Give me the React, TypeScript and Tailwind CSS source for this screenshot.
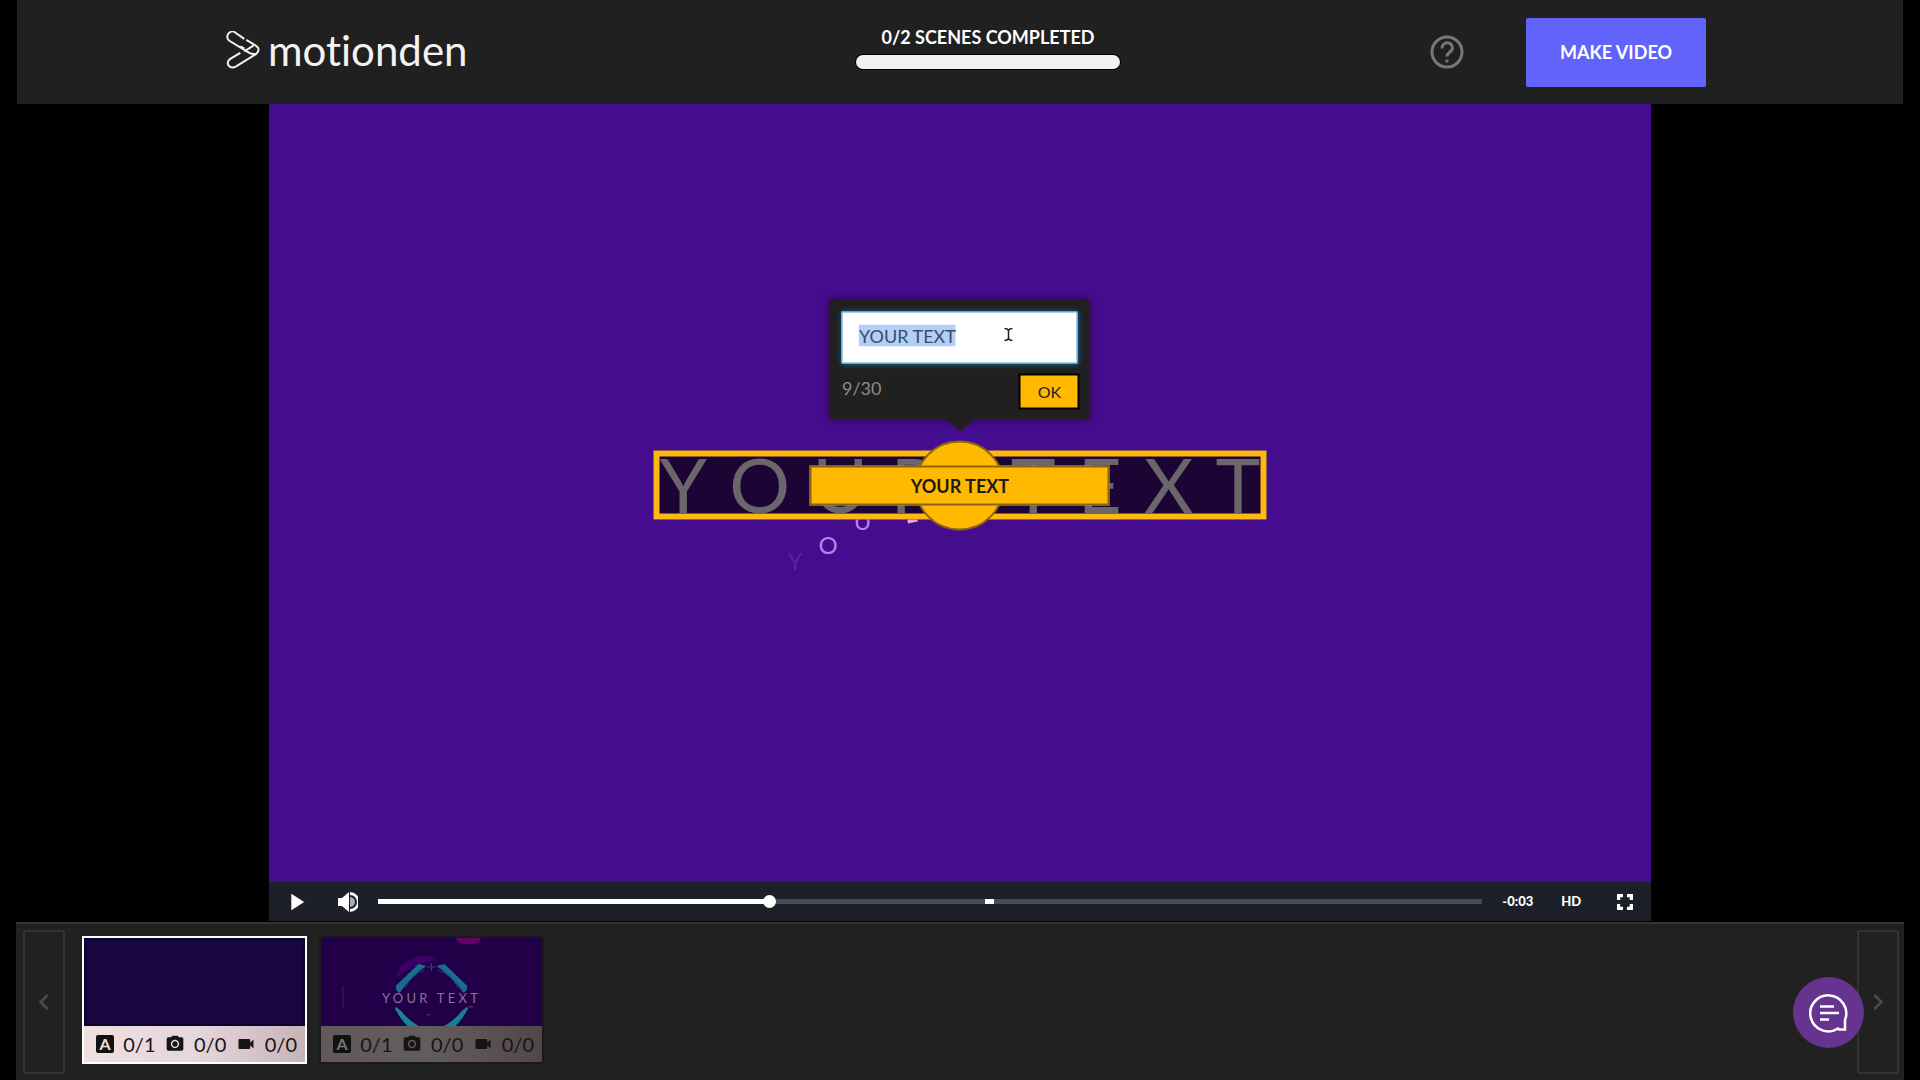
import { useEffect, useRef, useState } from "react";
import { MdCameraAlt, MdChevronLeft, MdChevronRight, MdPlayArrow, MdVideocam } from "react-icons/md";

const MAX_LENGTH = 30;

const scenes = [
  { id: 1, active: true, text: "0/1", photo: "0/0", video: "0/0" },
  { id: 2, active: false, text: "0/1", photo: "0/0", video: "0/0" },
];

function Logo() {
  return (
    <a href="#" className="flex items-center gap-2 text-[#f3f3f3]">
      <svg viewBox="76 98 102 116" className="h-[38px] w-[34px]" fill="none" stroke="currentColor" strokeWidth="6">
        <path d="M131 122 L105 104 A15 15 0 0 0 84 127 L145 164 Q158 171 168 167 Q176 161 174 151 Q170 144 160 139 L137 125" />
        <path d="M160 142 L131 160" />
        <path d="M119 165 L88 183 Q77 191 82 202 Q91 214 106 206 L168 168" />
        <path d="M119 145 L131 152" />
      </svg>
      <span className="text-[42px] leading-[48px] [font-variant-ligatures:none]">motionden</span>
    </a>
  );
}

function Header() {
  return (
    <header className="mx-[17px] flex h-26 shrink-0 items-center bg-[#202020] pr-[197px] pl-[209px]">
      <div className="w-[630px] pb-1">
        <Logo />
      </div>
      <div className="flex w-[264px] flex-col items-center gap-1 pb-3">
        <span id="progress-label" className="text-lg leading-7 font-bold text-white">
          0/2 SCENES COMPLETED
        </span>
        <div
          role="progressbar"
          aria-labelledby="progress-label"
          aria-valuenow={0}
          aria-valuemax={2}
          className="h-[14px] w-full rounded-full bg-[#f1f1f1] ring-1 ring-black"
        />
      </div>
      <div className="ml-auto flex items-center gap-[62px]">
        <button type="button" aria-label="Help" className="text-[#777]">
          <svg viewBox="0 0 34 34" className="size-[34px]" fill="none" stroke="currentColor" strokeWidth="3">
            <circle cx="17" cy="17" r="15" />
            <path d="M12 13.500 C12 6 22.500 6 22.500 13 C22.500 17 17 17 17 21.500" />
            <path d="M17 24.500 V27.500" />
          </svg>
        </button>
        <button type="button" className="h-[69px] w-[180px] rounded-xs bg-[#6163fb] text-lg font-bold text-white">
          MAKE VIDEO
        </button>
      </div>
    </header>
  );
}

function TextPopup() {
  const [value, setValue] = useState("YOUR TEXT");
  const inputRef = useRef<HTMLInputElement>(null);

  useEffect(() => {
    inputRef.current?.focus();
    inputRef.current?.select();
  }, []);

  return (
    <div className="absolute bottom-full left-1/2 mb-[31px] w-[260px] -translate-x-1/2 rounded-sm bg-[#202020] p-3 shadow-[0_0_8px_rgba(0,0,0,0.5)]">
      <div className="relative">
        <input
          ref={inputRef}
          aria-label="Text"
          value={value}
          maxLength={MAX_LENGTH}
          onChange={(e) => setValue(e.target.value)}
          className="block h-[52px] w-full border border-[#4aa5d8] bg-white px-4 pb-1 text-lg text-[#414b5b] shadow-[0_0_6px_#1272a8] outline-none selection:bg-[#b0d0fa] selection:text-[#414b5b]"
        />
        <svg
          viewBox="0 0 10 14"
          className="pointer-events-none absolute top-4 right-16 h-[14px] w-[10px]"
          fill="none"
          stroke="#222"
          strokeWidth="1.5"
        >
          <path d="M1 1 Q5 1 5 4 Q5 1 9 1 M5 3 V11 M1 13 Q5 13 5 10 Q5 13 9 13" />
        </svg>
      </div>
      <div className="mt-3 flex items-start justify-between">
        <span className="text-lg leading-6 text-[#8b8b8b]">
          {value.length}/{MAX_LENGTH}
        </span>
        <button type="button" className="h-8 w-[57px] bg-[#feb900] text-base text-[#222] ring-2 ring-black">
          OK
        </button>
      </div>
      <div className="absolute top-full left-1/2 h-3 w-7 -translate-x-1/2 bg-[#202020] [clip-path:polygon(0_0,100%_0,50%_100%)]" />
    </div>
  );
}

function Stage() {
  return (
    <div className="relative flex-1 bg-[#460c90]">
      <div className="absolute top-[49%] left-1/2 h-[69px] w-[613px] -translate-x-1/2 -translate-y-1/2">
        {/* letters still flying in behind the placeholder */}
        <div aria-hidden className="absolute top-12 left-[134px] flex items-start gap-4 text-2xl leading-7 text-[#b583e8]">
          <span className="mt-12 text-[#5a22a0]">Y</span>
          <span className="mt-8">O</span>
          <span className="mt-2">U</span>
          <span className="mt-5 ml-5 h-1 w-[10px] -rotate-12 bg-[#e3a6d8]" />
        </div>
        <div className="relative flex h-full items-center justify-between border-6 border-[#fdb913] bg-[#1c0535] pb-1 text-[76px] leading-[57px] text-[#6a666b]">
          {"YOUR TEXT".split("").map((char, i) => (
            <span key={i} className={char === " " ? "w-7" : ""}>
              {char}
            </span>
          ))}
        </div>
        <div className="absolute top-1/2 left-1/2 size-[90px] -translate-x-1/2 -translate-y-1/2 rounded-full border-2 border-[#8a6410] bg-[#feb900]" />
        <button
          type="button"
          className="absolute top-1/2 left-1/2 h-10 w-[300px] -translate-x-1/2 -translate-y-1/2 border-2 border-[#8a6410] bg-[#feb900] text-lg leading-6 font-bold text-[#201a10]"
        >
          YOUR TEXT
        </button>
        <TextPopup />
      </div>
    </div>
  );
}

function PlayerControls() {
  return (
    <div className="mb-px flex h-[39px] items-center bg-[#1d2028] pr-[18px] pl-[13px] text-white">
      <button type="button" aria-label="Play">
        <MdPlayArrow className="size-7" />
      </button>
      <button type="button" aria-label="Volume" className="ml-7">
        <svg viewBox="0 0 20 20" className="size-5" fill="currentColor">
          <path d="M0 6 H4 L11 0 V20 L4 14 H0 Z" />
          <path d="M12 0 A9.500 10 0 0 1 12 20 V17 A7 7 0 0 0 12 3 Z" />
          <path d="M12 5 A5 5 0 0 1 12 15 Z" fill="#a9abb0" />
        </svg>
      </button>
      <div className="relative ml-5 flex h-[5px] flex-1 items-center bg-[#434b5c]">
        <div className="h-full w-[36%] bg-white" />
        <div className="-ml-3 size-[13px] rounded-full bg-white" />
        <div className="absolute left-[55%] h-full w-[9px] bg-white" />
      </div>
      <span className="ml-5 text-[13px] font-black">-0:03</span>
      <button type="button" className="ml-7 text-[13px] font-black">
        HD
      </button>
      <button type="button" aria-label="Fullscreen" className="ml-9">
        <svg viewBox="0 0 16 16" className="size-4" fill="none" stroke="currentColor" strokeWidth="3.5">
          <path d="M1.500 6 V1.500 H6 M10 1.500 H14.500 V6 M14.500 10 V14.500 H10 M6 14.500 H1.500 V10" />
        </svg>
      </button>
    </div>
  );
}

function ScenePreview() {
  return (
    <div className="relative flex h-full items-center justify-center overflow-hidden bg-[#210048]">
      <svg viewBox="0 0 222 88" className="absolute inset-0 size-full" fill="none">
        <ellipse cx="148" cy="1" rx="12" ry="5" fill="#66006b" />
        <path d="M76 40 Q78 18 108 18 L116 22 Q92 26 76 40 Z" fill="#3a0068" />
        <path d="M22 48 V70" stroke="#3a0d4c" strokeWidth="2" />
        <path d="M75 48 L98 26 L106 28 Q90 38 79 55 Q75 53 75 48 Z" fill="#186d91" />
        <path d="M147 48 L124 26 L116 28 Q132 38 143 55 Q147 53 147 48 Z" fill="#186d91" />
        <path d="M75 70 Q80 80 88 88 H96 Q86 82 80 74 Z" fill="#16848f" stroke="#16848f" strokeWidth="2" />
        <path d="M147 70 Q142 80 134 88 H126 Q136 82 142 74 Z" fill="#16848f" stroke="#16848f" strokeWidth="2" />
        <path d="M84 50 Q92 36 104 32 M138 50 Q130 36 118 32 M111 25 V33 M107 29 H115" stroke="#1b4f79" />
        <path d="M106 77 H110 M148 69 H153" stroke="#5c3873" />
      </svg>
      <span className="relative mt-8 text-[13px] leading-4 tracking-[0.25em] text-[#8c719f]">YOUR TEXT</span>
    </div>
  );
}

function SceneCard({ scene }: { scene: (typeof scenes)[number] }) {
  return (
    <button
      type="button"
      className={`flex h-32 w-[225px] flex-col border-2 text-left ${scene.active ? "border-white" : "border-[#1a1a1a]"}`}
    >
      <div className="min-h-0 w-full flex-1">
        {scene.active ? <div className="h-full border-2 border-[#0c0430] bg-[#170640]" /> : <ScenePreview />}
      </div>
      <div
        className={`flex h-9 w-full items-center justify-between pr-2 pl-3 text-xl leading-8 text-[#151515] ${
          scene.active
            ? "bg-linear-to-r from-[#efdfdf] via-[#e6d6dd] to-[#c8b4b6]"
            : "bg-linear-to-r from-[#62595a] via-[#635c5f] to-[#514749]"
        }`}
      >
        <span
          className={`flex size-[18px] items-center justify-center rounded-xs bg-[#111] text-base leading-none font-bold ${
            scene.active ? "text-[#efdfdf]" : "text-[#777]"
          }`}
        >
          A
        </span>
        <span>{scene.text}</span>
        <MdCameraAlt className="size-5" />
        <span>{scene.photo}</span>
        <MdVideocam className="size-5" />
        <span>{scene.video}</span>
      </div>
    </button>
  );
}

function SceneStrip() {
  return (
    <footer className="mx-4 flex h-[158px] shrink-0 items-start border-t-2 border-[#333] bg-[#212121] pt-[6px] pr-[5px] pl-[7px]">
      <button
        type="button"
        aria-label="Previous scenes"
        className="flex h-36 w-[42px] items-center justify-center rounded-xs border-2 border-[#333] text-[#4a4a4a]"
      >
        <MdChevronLeft className="size-8 shrink-0" />
      </button>
      <div className="ml-[17px] flex gap-3 pt-[6px]">
        {scenes.map((scene) => (
          <SceneCard key={scene.id} scene={scene} />
        ))}
      </div>
      <button
        type="button"
        aria-label="Next scenes"
        className="ml-auto flex h-36 w-[42px] items-center justify-center rounded-xs border-2 border-[#333] text-[#4a4a4a]"
      >
        <MdChevronRight className="size-8 shrink-0" />
      </button>
    </footer>
  );
}

function ChatButton() {
  return (
    <button
      type="button"
      aria-label="Open chat"
      className="fixed right-14 bottom-8 flex size-[71px] items-center justify-center rounded-full bg-[#673391]"
    >
      <svg viewBox="0 0 40 40" className="size-10" fill="none" stroke="#fff" strokeWidth="2.500">
        <path d="M36 27 A18 18 0 1 0 29 35.500 L30 36.500 H36 Z" />
        <path d="M11 13.500 H25 M11 20 H30 M11 26.500 H20" />
      </svg>
    </button>
  );
}

export default function App() {
  return (
    <div className="flex min-h-screen flex-col bg-black font-['Lato',sans-serif]">
      <Header />
      <main className="mx-auto flex w-[72%] flex-1 flex-col">
        <Stage />
        <PlayerControls />
      </main>
      <SceneStrip />
      <ChatButton />
    </div>
  );
}
